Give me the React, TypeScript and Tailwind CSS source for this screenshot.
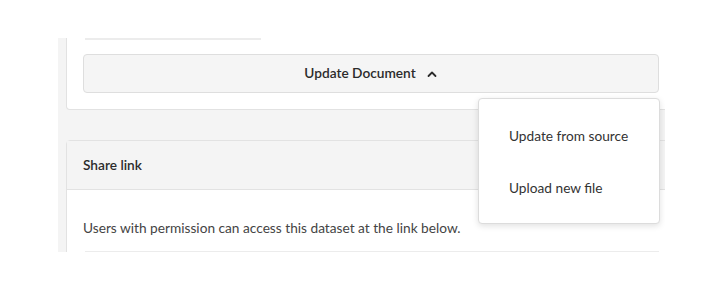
import React from "react";

/* Update document panel with open menu */
function ChevronUp() {
  return (
    <svg width="12" height="12" viewBox="0 0 12 12" className="ml-2.5 text-[#2b2b2b]">
      <path d="M2.5 8 L6 4.5 L9.5 8" fill="none" stroke="currentColor" strokeWidth="1.8" strokeLinecap="round" strokeLinejoin="round" />
    </svg>
  );
}

export default function App() {
  return (
    <div className="h-[300px] w-[720px] bg-white pt-[38px] font-['Lato','Noto_Sans',sans-serif] text-[#333]">
      <div className="relative ml-[58px] h-[214px] w-[607px] overflow-hidden bg-[#f4f4f4] pl-2">
        <div className="w-[610px] rounded-b border border-t-0 border-[#e2e2e2] bg-white px-4 pb-4">
          <div className="ml-0.5 h-[2px] w-[176px] bg-[#ececec]" />
          <button className="mt-[14px] flex h-[39px] w-full items-center justify-center rounded border border-[#dedede] bg-[#f5f5f5] text-[13.7px] font-semibold text-[#2b2b2b]">
            Update Document
            <ChevronUp />
          </button>
        </div>

        <div className="mt-[30px] w-[610px] rounded-t border border-[#e2e2e2] bg-white">
          <div className="flex h-[49px] items-center border-b border-[#e2e2e2] bg-[#f4f4f4] px-4 text-[13.7px] font-semibold text-[#2b2b2b]">
            Share link
          </div>
          <div className="px-4 pt-[28px] text-[13.7px] text-[#444]">
            Users with permission can access this dataset at the link below.
          </div>
          <div className="ml-[18px] mt-[12px] h-[2px] w-[574px] bg-[#ececec]" />
        </div>

        <div className="absolute left-[420px] top-[60px] w-[182px] rounded border border-[#dcdcdc] bg-white pb-[18px] pt-[20px] shadow-[0_2px_6px_rgba(0,0,0,0.12)]">
          <div className="flex h-[34px] items-center pl-[30px] text-[13.7px] text-[#333]">Update from source</div>
          <div className="mt-[18px] flex h-[34px] items-center pl-[30px] text-[13.7px] text-[#333]">Upload new file</div>
        </div>
      </div>
    </div>
  );
}
